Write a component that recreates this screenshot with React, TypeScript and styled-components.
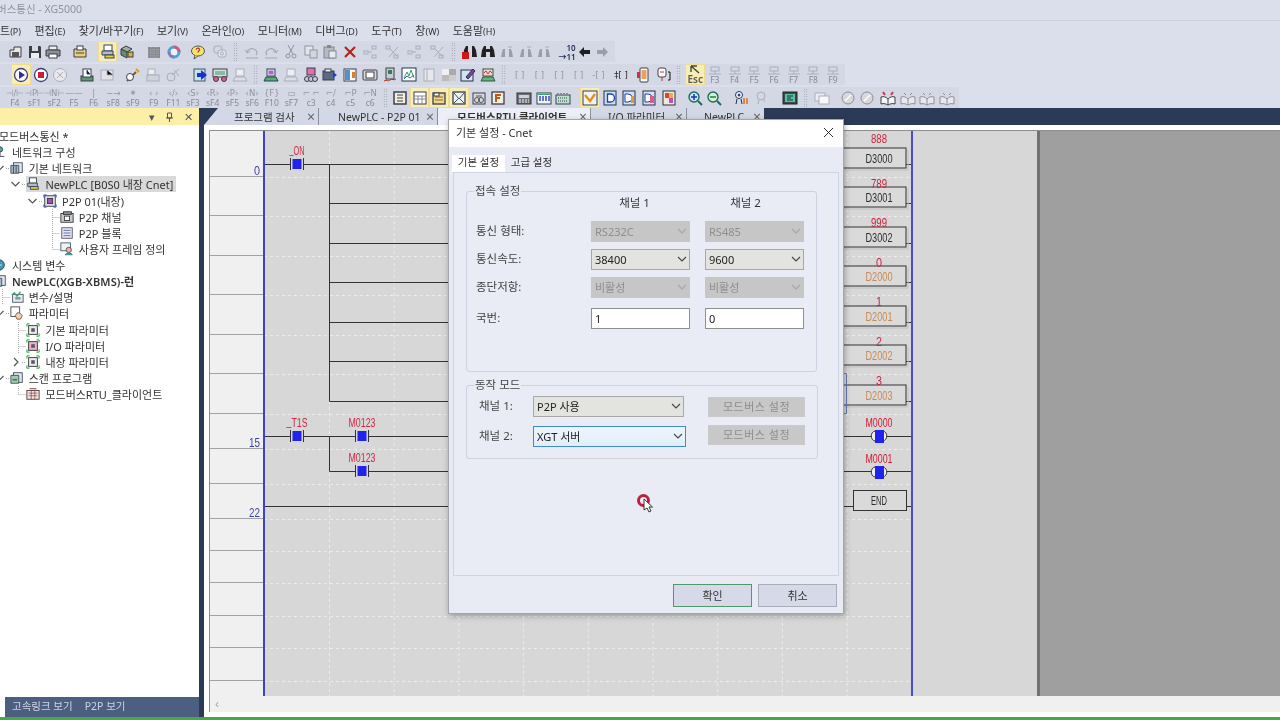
import React, { ReactNode } from 'react'
import styled, { createGlobalStyle } from 'styled-components'

const GlobalStyle = createGlobalStyle`
  html, body { margin: 0; padding: 0; background: #d9dde9; }
  * { box-sizing: border-box; }
`

const FONT = `"Noto Sans", "Noto Sans CJK KR", sans-serif`

const d = '#3a3f48'
const g = '#a9aeba'

const glyphs: Record<string, ReactNode> = {
  open: <><path d="M2 6h4V3h7v10H2z" fill="#e6e6e6" stroke={d} /><rect x="4" y="8" width="7" height="5" fill="#555" /></>,
  save: <><path d="M2 2h11l1 1v11H2z" fill="#3c3f46" /><rect x="5" y="2" width="6" height="5" fill="#d8dbe2" /><rect x="4" y="9" width="8" height="5" fill="#eee" /></>,
  print: <><path d="M4 2h8v4H4z" fill="#eee" stroke={d} /><path d="M1 6h14v6H1z" fill="#8c8f96" stroke={d} /><rect x="4" y="10" width="8" height="4" fill="#fff" stroke={d} /></>,
  clip: <><path d="M2 5h12v8H2z" fill="#ebcf78" stroke={d} /><rect x="5" y="2" width="6" height="4" fill="#fff" stroke={d} /><path d="M4 9h8" stroke={d} /></>,
  plc: <><rect x="4" y="1" width="8" height="6" fill="#fff" stroke="#345" /><path d="M2 7h11v4H2z" fill="#b8bcc6" stroke="#345" /><rect x="5" y="11" width="9" height="3" fill="#e6cf40" stroke="#345" /></>,
  plcg: <><path d="M2 5l5-3 6 3-5 3z" fill="#9fb09a" stroke={d} /><path d="M2 5v6l6 3V8z" fill="#6f8a68" stroke={d} /><rect x="9" y="8" width="5" height="5" fill="#d9b33a" stroke={d} /></>,
  noise: <><rect x="2" y="3" width="12" height="11" fill="#85888e" /><path d="M2 6h12M2 9h12M2 12h12M5 3v11M8 3v11M11 3v11" stroke="#a7a9ae" strokeDasharray="1 1" /></>,
  ring: <><circle cx="8" cy="8" r="5" fill="#eef" stroke="#46a6d8" strokeWidth="3" /><path d="M8 3a5 5 0 0 1 5 5" fill="none" stroke="#d2567a" strokeWidth="3" /><path d="M3 8a5 5 0 0 0 5 5" fill="none" stroke="#7d7fb5" strokeWidth="3" /></>,
  bubble: <><ellipse cx="8" cy="7" rx="6.5" ry="5" fill="#f7e26d" stroke="#555" /><path d="M5 11l-1 4 4-3" fill="#f7e26d" stroke="#555" /><path d="M6 5.5c1-2 4-1.500 3.500.5-.3 1-1.500 1-1.500 2.500" fill="none" stroke="#c0392b" strokeWidth="1.300" /></>,
  bubbleg: <><rect x="2" y="2" width="8" height="7" rx="2" fill="none" stroke={g} /><rect x="6" y="6" width="8" height="7" rx="2" fill="#dfe2ea" stroke={g} /><circle cx="10" cy="9.500" r="1.500" fill="none" stroke={g} /></>,
  undo: <><path d="M3 8a5 4 0 1 1 9 3" fill="none" stroke="#9fa8ba" strokeWidth="1.200" /><path d="M1 6l2 3 3-2" fill="none" stroke="#9fa8ba" /><path d="M2 14h12" stroke="#9fa8ba" /></>,
  redo: <><path d="M13 8a5 4 0 1 0-9 3" fill="none" stroke="#9fa8ba" strokeWidth="1.200" /><path d="M15 6l-2 3-3-2" fill="none" stroke="#9fa8ba" /><path d="M2 14h12" stroke="#9fa8ba" /></>,
  cut: <><path d="M5 1l5 9M11 1L6 10" stroke="#8f95a3" /><circle cx="5" cy="12" r="2" fill="none" stroke="#8f95a3" /><circle cx="11" cy="12" r="2" fill="none" stroke="#8f95a3" /></>,
  copy: <><rect x="2" y="2" width="8" height="9" fill="#e3e5ec" stroke="#8f95a3" /><rect x="7" y="6" width="7" height="8" fill="#d3d6df" stroke="#8f95a3" /></>,
  paste: <><rect x="2" y="3" width="10" height="11" fill="#b7bac2" stroke="#80858f" /><rect x="5" y="1" width="4" height="3" fill="#888" /><rect x="7" y="7" width="7" height="7" fill="#e9ebf0" stroke="#80858f" /></>,
  redx: <path d="M3 3l10 10M13 3L3 13" stroke="#b4231d" strokeWidth="2.200" />,
  nodes: <><rect x="1" y="7" width="4" height="3" fill="none" stroke={g} /><path d="M5 8h4" stroke={g} /><rect x="9" y="2" width="4" height="3" fill="none" stroke={g} /><rect x="9" y="11" width="4" height="3" fill="none" stroke={g} /></>,
  nodex: <><rect x="1" y="2" width="4" height="3" fill="none" stroke={g} /><path d="M5 5l8 8M13 3L4 13" stroke={g} /><rect x="9" y="11" width="4" height="3" fill="none" stroke={g} /></>,
  binr: <><path d="M2 6l2-4h2v11H1zM14 6l-2-4h-2v11h5z" fill="#222" /><rect x="0" y="8" width="7" height="7" fill="#d01818" /></>,
  bin: <path d="M2 6l2-4h2v11H1zM14 6l-2-4h-2v11h5zM6 5h4v3H6z" fill="#222" />,
  bing: <><path d="M3 8l1-3h2v8H2zM13 8l-1-3h-2v8h4z" fill="#9a9ea8" /><path d="M9 3h4" stroke={g} /></>,
  left: <path d="M8 3L3 8l5 5V10h6V6H8z" fill="#1d1f24" />,
  right: <path d="M8 3l5 5-5 5V10H2V6h6z" fill="#9a9ea8" />,
  play: <><circle cx="8" cy="8" r="6.500" fill="#fff" stroke="#3a3f78" strokeWidth="1.300" /><path d="M6 4l6 4-6 4z" fill="#2a2f9c" /></>,
  stop: <><circle cx="8" cy="8" r="6.500" fill="#fff" stroke="#3a3f78" strokeWidth="1.300" /><rect x="5" y="5" width="6" height="6" fill="#c4203c" /></>,
  xoff: <><circle cx="8" cy="8" r="6.500" fill="#e9e9ec" stroke={g} /><path d="M5 5l6 6M11 5l-6 6" stroke={g} /></>,
  clock: <><rect x="2" y="9" width="12" height="5" fill="#5a9a70" stroke={d} /><rect x="4" y="2" width="8" height="8" fill="#fff" stroke={d} /><path d="M8 3v4h3" stroke="#2a3a9c" /></>,
  docg: <><rect x="2" y="3" width="12" height="10" fill="#e0e2e8" stroke={g} /><path d="M8 3v5h6" stroke={g} /></>,
  wand: <><path d="M2 14l9-9" stroke="#7a5a30" strokeWidth="2" /><circle cx="5" cy="10" r="3.500" fill="#fff" stroke={d} /><path d="M11 2l3 3" stroke="#d4a020" strokeWidth="2" /></>,
  plcgray: <><rect x="3" y="2" width="7" height="6" fill="#ecedf1" stroke={g} /><rect x="2" y="8" width="12" height="6" fill="#cfd2da" stroke={g} /></>,
  toolx: <><circle cx="6" cy="10" r="4" fill="none" stroke={g} /><path d="M7 8l7-6M9 3l5 6" stroke={g} /></>,
  push: <><rect x="2" y="2" width="11" height="12" fill="#bfe3f0" stroke="#456" /><path d="M15 8L9 3v3H5v4h4v3z" fill="#1a2fd0" /></>,
  net: <><rect x="1" y="2" width="14" height="8" fill="#cfe4da" stroke={d} /><path d="M3 5h10M3 7h10" stroke="#4a8a70" /><circle cx="4" cy="12" r="2.500" fill="#e05a8a" stroke={d} /><circle cx="12" cy="12" r="2.500" fill="#e05a8a" stroke={d} /></>,
  mon: <><rect x="4" y="2" width="8" height="7" fill="#f2f2f6" stroke="#245" /><rect x="5.500" y="3.500" width="5" height="4" fill="#b060c8" /><path d="M1 14l2-4h10l2 4z" fill="#58b070" stroke="#245" /></>,
  mong: <><rect x="4" y="2" width="8" height="7" fill="#eceef2" stroke={g} /><path d="M1 14l2-4h10l2 4z" fill="#dcdee6" stroke={g} /></>,
  pink: <><rect x="4" y="1" width="8" height="7" fill="#e070b0" stroke={d} /><circle cx="4" cy="12" r="2.500" fill="#c8c8e0" stroke={d} /><circle cx="8" cy="12" r="2.500" fill="#c8c8e0" stroke={d} /><circle cx="12" cy="12" r="2.500" fill="#c8c8e0" stroke={d} /></>,
  folderb: <><rect x="1" y="4" width="11" height="9" fill="#5a6a80" stroke={d} /><rect x="3" y="2" width="6" height="3" fill="#eee" stroke={d} /><path d="M15 8l-4-3v6z" fill="#1a40d0" /></>,
  panels: <><rect x="2" y="2" width="12" height="12" fill="#fff" stroke={d} /><rect x="3" y="3" width="5" height="10" fill="#5a90c0" /><rect x="10" y="5" width="3" height="6" fill="#d88030" /></>,
  tv: <><rect x="1" y="3" width="14" height="10" rx="1" fill="#d9d9dd" stroke={d} /><rect x="4" y="5" width="8" height="6" fill="#fff" stroke={d} /></>,
  batt: <><rect x="4" y="1" width="8" height="11" fill="#c8ccd4" stroke={d} /><rect x="6" y="3" width="4" height="4" fill="#3a7a5a" /><path d="M2 14c3-2 4 1 6-1s4 1 6-1" fill="none" stroke="#c03020" /></>,
  chart: <><rect x="1" y="1" width="14" height="13" fill="#fff" stroke="#234" /><path d="M3 11l3-6 2 4 2-6 3 8" fill="none" stroke="#38a060" /><path d="M3 12l3-3 3 2 4-3" fill="none" stroke="#3060d0" /></>,
  tileg: <><rect x="3" y="2" width="10" height="12" fill="#e6e8ee" stroke={g} /><path d="M6 2v12" stroke={g} /></>,
  tiles: <><rect x="1" y="2" width="7" height="6" fill="#f0f0f2" /><rect x="8" y="2" width="7" height="6" fill="#aaa" /><rect x="1" y="8" width="7" height="6" fill="#bbb" /><rect x="8" y="8" width="7" height="6" fill="#ccc" /></>,
  memo: <><rect x="1" y="3" width="12" height="11" fill="#d0e4f4" stroke="#234" /><path d="M6 10l7-8 2 2-7 8z" fill="#8a40a0" stroke="#234" /></>,
  wave: <><rect x="3" y="2" width="10" height="7" fill="#f6d4d4" stroke="#354" /><path d="M4 6l2-2 2 3 2-3 2 2" fill="none" stroke="#c03030" /><path d="M1 14l2-4h10l2 4z" fill="#5fb878" stroke="#354" /></>,
  phone: <><rect x="4" y="1" width="8" height="14" rx="1" fill="#fff" stroke={d} /><rect x="5.500" y="3" width="5" height="9" fill="#e9a060" /><path d="M1 5h3v6H1z" fill="#d03040" /></>,
  tag: <><rect x="3" y="1" width="8" height="9" rx="2" fill="#fff" stroke={d} /><path d="M7 10v4M5 5h4" stroke="#c03030" /><path d="M13 5h2v8h-2" fill="none" stroke="#111" /></>,
  doc: <><rect x="2" y="2" width="12" height="12" fill="#f2efe0" stroke={d} strokeWidth="1.500" /><path d="M5 5h6M5 8h6M5 11h6" stroke={d} /></>,
  grid: <><rect x="2" y="2" width="12" height="12" fill="#fff" stroke={d} /><path d="M2 6h12M2 9h12M6 6v8M10 6v8" stroke="#889" /></>,
  foldy: <><rect x="2" y="3" width="12" height="11" fill="#ecd690" stroke={d} strokeWidth="1.300" /><path d="M4 7h8M4 10h8" stroke="#963" /><rect x="3" y="3" width="5" height="3" fill="#fff" stroke={d} /></>,
  env: <><rect x="2" y="2" width="12" height="12" fill="#eef0f2" stroke={d} strokeWidth="1.300" /><path d="M3 3l5 6 5-6M3 13l5-5 5 5" fill="none" stroke="#456" /></>,
  gear: <><rect x="2" y="3" width="12" height="11" fill="#d8dadf" stroke={d} /><circle cx="6" cy="10" r="2.500" fill="none" stroke="#555" /><circle cx="10" cy="10" r="2.500" fill="none" stroke="#555" /><path d="M5 6h6" stroke="#555" /></>,
  ff: <><rect x="2" y="2" width="12" height="12" fill="#f1eee2" stroke={d} strokeWidth="1.300" /><path d="M6 12V5h5M6 8h4" fill="none" stroke="#c05a10" strokeWidth="2" /></>,
  blk: <><rect x="1" y="3" width="14" height="11" fill="#6e7278" stroke="#333" /><rect x="3" y="5" width="10" height="3" fill="#cfd2d8" /><path d="M3 10h10M3 12h10" stroke="#eee" strokeDasharray="2 1" /></>,
  blk2: <><rect x="1" y="3" width="14" height="11" fill="#f2f6fb" stroke="#345" /><path d="M4 6v5M7 6v5M10 6v5M13 6v5" stroke="#2a40b0" strokeWidth="1.400" /><path d="M2 4.500h12" stroke="#48a070" /></>,
  blk3: <><rect x="1" y="5" width="14" height="9" fill="#bfe0cc" stroke="#345" /><path d="M3 3v2M6 3v2M9 3v2M12 3v2M3 8h10M3 11h10" stroke="#345" strokeDasharray="1 1" /></>,
  vv: <><rect x="1" y="1" width="14" height="14" fill="#f3f3f4" stroke={d} /><path d="M3 5l5 6 5-7" fill="none" stroke="#e09020" strokeWidth="2.400" /></>,
  dd1: <><rect x="2" y="1" width="12" height="14" fill="#c9ddf5" stroke="#234" /><path d="M5.500 4h3a4 4 0 0 1 0 8h-3z" fill="#fff" stroke="#1a3fb0" strokeWidth="1.300" /></>,
  dd2: <><rect x="2" y="1" width="12" height="14" fill="#cfe0f0" stroke="#234" /><path d="M4 4h3a4 4 0 0 1 0 8H4z" fill="#fff" stroke="#1a3fb0" /><rect x="10" y="6" width="3" height="7" fill="#d89a40" /></>,
  dd3: <><rect x="2" y="1" width="12" height="14" fill="#d8e0ee" stroke="#234" /><path d="M4 4h3a4 4 0 0 1 0 8H4z" fill="#fff" stroke="#1a3fb0" /><rect x="9" y="6" width="4" height="7" fill="#d85a9a" /></>,
  dd4: <><rect x="2" y="1" width="12" height="14" fill="#f4e8d8" stroke="#234" /><rect x="4" y="3" width="4" height="5" fill="#e04040" /><rect x="8" y="8" width="4" height="5" fill="#c050b0" /><rect x="8" y="3" width="4" height="5" fill="#e8b040" /></>,
  zin: <><circle cx="7" cy="7" r="5" fill="#cfe8f4" stroke="#1a6a60" strokeWidth="1.400" /><path d="M11 11l4 4" stroke="#1a6a60" strokeWidth="2" /><path d="M4 7h6M7 4v6" stroke="#1a30c0" strokeWidth="1.500" /></>,
  zout: <><circle cx="7" cy="7" r="5" fill="#d8f0d0" stroke="#1a6a60" strokeWidth="1.400" /><path d="M11 11l4 4" stroke="#1a6a60" strokeWidth="2" /><path d="M4 7h6" stroke="#1a8040" strokeWidth="1.500" /></>,
  probe: <><circle cx="6" cy="5" r="3.500" fill="#fff" stroke="#234" /><circle cx="6" cy="5" r="1.500" fill="#2a40c0" /><path d="M4 9l-1 5M8 9l1 5" stroke="#234" /><path d="M11 8v6M14 8v6" stroke="#e07020" strokeWidth="1.500" /></>,
  probeg: <><circle cx="8" cy="6" r="4" fill="none" stroke={g} /><path d="M6 10l-1 4M10 9l2 3" stroke={g} /></>,
  term: <><rect x="1" y="2" width="14" height="12" fill="#3e4a4a" stroke="#222" /><rect x="3" y="4" width="10" height="8" fill="#5ac0a0" /><path d="M5 6h6M5 8h4M5 10h6" stroke="#134" /></>,
  page: <><rect x="1" y="3" width="10" height="8" fill="#eceef3" stroke={g} /><rect x="5" y="6" width="10" height="8" fill="#f7f7fa" stroke={g} /></>,
  disc: <><circle cx="8" cy="8" r="6" fill="#d8d8dc" stroke="#8a8e98" /><path d="M5 11l6-6" stroke="#fff" strokeWidth="1.500" /></>,
  book: <><path d="M1 7c3-1 5 0 7 2 2-2 4-3 7-2v7c-3-1-5 0-7 1-2-1-4-2-7-1z" fill="#f4f4f6" stroke={d} /><path d="M8 9v6" stroke={d} /><path d="M3 2l2 3M13 2l-2 3" stroke="#d0305a" strokeWidth="2" /></>,
  bookg: <><path d="M1 7c3-1 5 0 7 2 2-2 4-3 7-2v7c-3-1-5 0-7 1-2-1-4-2-7-1z" fill="#e6e8ee" stroke="#8c909a" /><path d="M8 9v6" stroke="#8c909a" /><path d="M4 3l2 2M12 3l-2 2" stroke="#8c909a" /></>,
  // tree icons
  tnet: <><circle cx="8" cy="5" r="3" fill="#5aa0a0" stroke={d} /><path d="M3 13h10M8 8v5" stroke={d} /><rect x="2" y="10" width="4" height="4" fill="#e0c060" stroke={d} /></>,
  cube: <><rect x="4" y="2" width="10" height="11" fill="#e3e8ee" stroke="#3c4a58" /><path d="M1 5h9v9H1z" fill="#aab8c4" stroke="#3c4a58" /><path d="M4 5v9M7 5v9" stroke="#3c4a58" /></>,
  cubeg: <><rect x="4" y="2" width="10" height="11" fill="#e3e8ee" stroke="#3c4a58" /><path d="M1 5h9v9H1z" fill="#a9c8b4" stroke="#3c4a58" /><path d="M3 10h5" stroke="#209050" strokeWidth="2" /></>,
  p2p: <><rect x="2" y="2" width="12" height="12" fill="#e4e6ec" stroke="#333" /><rect x="5" y="5" width="6" height="6" fill="#a050b0" stroke="#333" /><path d="M1 1h3M1 1v3M15 1h-3M15 1v3M1 15h3M1 15v-3M15 15h-3M15 15v-3" stroke="#3040d0" /></>,
  tch: <><rect x="1" y="4" width="14" height="10" fill="#c9cdd6" stroke="#333" /><rect x="4" y="2" width="9" height="3" fill="#8c96a0" stroke="#333" /><rect x="5" y="7" width="6" height="5" fill="#fff" stroke="#333" /></>,
  tblk: <><rect x="2" y="2" width="12" height="12" fill="#e6e7f4" stroke="#556" /><path d="M4 5h8M4 8h8M4 11h8" stroke="#5a62a0" /></>,
  tuser: <><rect x="1" y="1" width="11" height="9" fill="#f2f2f6" stroke="#456" /><circle cx="10" cy="9" r="3" fill="#e6b890" stroke="#456" /><path d="M6 15c0-3 8-3 8 0" fill="#40a0a0" stroke="#456" /></>,
  tsys: <><circle cx="7" cy="8" r="6" fill="#3e9ab0" stroke="#345" /><path d="M4 8h6M7 4v8" stroke="#eee" /></>,
  tvars: <><rect x="3" y="5" width="12" height="9" fill="#e8ecef" stroke="#456" /><path d="M2 6l3-3 3 4 4-5" fill="none" stroke="#40a070" strokeWidth="1.500" /><rect x="6" y="8" width="6" height="3" fill="#89a" /></>,
  tparam: <><rect x="1" y="1" width="10" height="11" fill="#fff" stroke="#445" /><path d="M8 8c2-1 4 0 6 3l-2 4H8L6 11z" fill="#f4d0b0" stroke="#654" /></>,
  frame: <><rect x="3" y="3" width="10" height="10" fill="#e6e8ec" stroke="#333" /><rect x="6" y="6" width="4" height="4" fill="#556" /><path d="M1 1h3M1 1v3M15 1h-3M15 1v3M1 15h3M1 15v-3M15 15h-3M15 15v-3" stroke="#40b050" strokeWidth="1.300" /></>,
  framep: <><rect x="3" y="3" width="10" height="10" fill="#e8b0c8" stroke="#333" /><rect x="6" y="6" width="4" height="4" fill="#556" /><path d="M1 1h3M1 1v3M15 1h-3M15 1v3M1 15h3M1 15v-3M15 15h-3M15 15v-3" stroke="#40b050" strokeWidth="1.300" /></>,
  tprog: <><rect x="1" y="4" width="14" height="10" fill="#efe6e6" stroke="#533" /><path d="M3 7h10M3 10h10M6 4v10M10 4v10" stroke="#a05a5a" /><path d="M4 2h8" stroke="#533" /></>,
}

type ToolItem = string | number | { k?: string; on?: boolean; text?: string; top?: string; key?: string }

const rowOne: ToolItem[] = [
  1, 'open', -1, 'save', -1, 'print', 7, 'clip', 8, { k: 'plc', on: true }, 'plcg', 7, 'noise', 'ring', 5, 'bubble', 2, 'bubbleg', 'grip',
  'undo', 'redo', 'cut', 'copy', 'paste', 'redx', 1, 'nodes', 2, 'nodex', 3, 'nodes', 3, 'nodex', 'grip',
  'binr', -1, 'bin', -1, 'bing', -1, 'bing', -1, 'bing', 3, { text: '10\n→11' }, -3, 'left', 'right',
]

const rowTwo: ToolItem[] = [
  6, { k: 'play', on: true }, 'stop', 'xoff', 7, 'clock', 'docg', 7, 'wand', 'plcgray', 'toolx', 8, 'push', 'net', 'mong', 'grip',
  'mon', 'mong', 'pink', 'folderb', 'panels', 'tv', 'batt', 'chart', 'tileg', 'tiles', 'memo', 'wave', 'grip',
  { top: '[ ]' }, { top: '[ ]' }, { top: '[ ]' }, { top: '[ ]' }, { top: '-[ ]' }, 3, { top: '‡[ ]', key: 'dark' }, 3, 'phone', 'tag', 'grip',
  { key: 'esc', on: true }, { key: 'F3' }, { key: 'F4' }, { key: 'F5' }, { key: 'F6' }, { key: 'F7' }, { key: 'F8' }, { key: 'F9' },
]

const rowThree: ToolItem[] = [
  { top: '⊣/⊢', key: 'F4' }, { top: '⊣P⊢', key: 'sF1' }, { top: '⊣N⊢', key: 'sF2' }, { top: '——', key: 'F5' }, { top: '|', key: 'F6' }, { top: '−→', key: 'sF8' }, { top: '⁕', key: 'sF9' },
  1, { top: '‹ ›', key: 'F9' }, { top: '‹/›', key: 'F11' }, { top: '‹S›', key: 'sF3' }, { top: '‹R›', key: 'sF4' }, { top: '‹P›', key: 'sF5' }, { top: '‹N›', key: 'sF6' }, { top: '{F}', key: 'F10' }, { top: '▭', key: 'sF7' },
  { top: '⌐ ⌐', key: 'c3' }, { top: '⌐/', key: 'c4' }, { top: '⌐P', key: 'c5' }, { top: '⌐N', key: 'c6' }, 'grip',
  -2, 'doc', { k: 'grid', on: true }, { k: 'foldy', on: true }, { k: 'env', on: true }, 'gear', 'ff', 6, 'blk', 'blk2', 'blk3', 7, { k: 'vv', on: true }, 'dd1', 'dd2', 'dd3', 'dd4', 6, 'zin', 'zout', 7, 'probe', 'probeg', 10, 'term', 'grip', 'page', 6, 'disc', 'disc', 1, 'book', 'bookg', 'bookg', 'bookg',
]

const menus = [['트', 'P'], ['편집', 'E'], ['찾기/바꾸기', 'F'], ['보기', 'V'], ['온라인', 'O'], ['모니터', 'M'], ['디버그', 'D'], ['도구', 'T'], ['창', 'W'], ['도움말', 'H']]

const treeRows = [
  { level: 0, text: '모드버스통신 *' },
  { level: 1, text: '네트워크 구성', icon: 'tnet' },
  { level: 2, text: '기본 네트워크', icon: 'cube', arrow: 'down' },
  { level: 3, text: 'NewPLC [B0S0 내장 Cnet]', icon: 'plc', arrow: 'down', selected: true },
  { level: 4, text: 'P2P 01(내장)', icon: 'p2p', arrow: 'down' },
  { level: 5, text: 'P2P 채널', icon: 'tch', elbow: 'mid' },
  { level: 5, text: 'P2P 블록', icon: 'tblk', elbow: 'mid' },
  { level: 5, text: '사용자 프레임 정의', icon: 'tuser', elbow: 'end' },
  { level: 1, text: '시스템 변수', icon: 'tsys' },
  { level: 1, text: 'NewPLC(XGB-XBMS)-런', icon: 'cube', bold: true },
  { level: 2, text: '변수/설명', icon: 'tvars', elbow: 'mid' },
  { level: 2, text: '파라미터', icon: 'tparam', arrow: 'down' },
  { level: 3, text: '기본 파라미터', icon: 'frame', elbow: 'mid' },
  { level: 3, text: 'I/O 파라미터', icon: 'framep', elbow: 'mid' },
  { level: 3, text: '내장 파라미터', icon: 'frame', arrow: 'right' },
  { level: 2, text: '스캔 프로그램', icon: 'cubeg', arrow: 'down' },
  { level: 3, text: '모드버스RTU_클라이언트', icon: 'tprog', elbow: 'end' },
]

const docTabs = [
  { text: '프로그램 검사', pad: 30, width: 114, first: true },
  { text: 'NewPLC - P2P 01', pad: 19, width: 119 },
  { text: '모드버스RTU 클라이언트', pad: 19, width: 153, active: true },
  { text: 'I/O 파라미터', pad: 17, width: 96 },
  { text: 'NewPLC', pad: 17, width: 78 },
]

const gridRows = [176, 215, 255, 294, 334, 373, 413, 448, 483, 518, 550, 582, 615, 647, 680]
const branchRows = [203, 243, 282, 322, 361, 401]
const outputs = [
  { top: 148, wire: 164, value: '888', valueY: 143, label: 'D3000', warm: false },
  { top: 187, wire: 203, value: '789', valueY: 187.5, label: 'D3001', warm: false },
  { top: 227, wire: 243, value: '999', valueY: 227, label: 'D3002', warm: false },
  { top: 266, wire: 282, value: '0', valueY: 266.5, label: 'D2000', warm: true },
  { top: 306, wire: 322, value: '1', valueY: 306, label: 'D2001', warm: true },
  { top: 345, wire: 361, value: '2', valueY: 345.5, label: 'D2002', warm: true },
  { top: 385, wire: 401, value: '3', valueY: 385, label: 'D2003', warm: true },
]

const Screen = styled.div`
  position: relative;
  width: 1280px;
  height: 720px;
  overflow: hidden;
  background: #dbdfeb;
  font-family: ${FONT};
  font-size: 11px;
  color: #333;
  display: flex;
  flex-direction: column;
  filter: blur(0.35px);
`
const TitleBar = styled.div`
  height: 20px;
  line-height: 19px;
  margin-left: -3px;
  color: #8e929e;
  font-size: 10.500px;
  flex: none;
`
const MenuBar = styled.div`
  height: 21px;
  flex: none;
  display: flex;
  align-items: center;
  gap: 13.500px;
  border-top: 1px solid #cdd1dd;
  padding-bottom: 3px;
  white-space: nowrap;
`
const MenuItem = styled.span`
  font-size: 11px;
  color: #333;
  small { font-size: 9px; }
`
const ToolStack = styled.div`
  flex: none;
  height: 67px;
  display: flex;
  flex-direction: column;
  align-items: flex-start;
  gap: 2px;
`
const ToolRow = styled.div`
  height: 21px;
  display: flex;
  align-items: center;
  background: #d4d8e5;
  padding-left: 5px;
  padding-right: 2px;
`
const ToolSlot = styled.div<{ $on?: boolean }>`
  width: 19.7px;
  height: 21px;
  flex: none;
  display: flex;
  flex-direction: column;
  align-items: center;
  justify-content: center;
  background: ${p => (p.$on ? '#f7edb6' : 'transparent')};
  box-shadow: ${p => (p.$on ? 'inset 0 0 0 1px #f0dc8c' : 'none')};
`
const ToolGap = styled.div<{ $w: number }>`
  flex: none;
  width: ${p => Math.max(p.$w, 0)}px;
  margin-right: ${p => Math.min(p.$w, 0)}px;
`
const Grip = styled.div`
  flex: none;
  width: 5px;
  height: 19px;
  margin: 0 4px 0 3px;
  background-image: radial-gradient(#8b8f9a 0.7px, transparent 0.8px);
  background-size: 2.500px 2.500px;
`
const KeyTop = styled.span<{ $dark?: boolean }>`
  font-family: "DejaVu Sans", sans-serif;
  font-size: 8.500px;
  line-height: 10px;
  color: ${p => (p.$dark ? '#222' : '#90959f')};
  white-space: nowrap;
`
const KeyLabel = styled.span`
  font-size: 8.500px;
  line-height: 9px;
  color: #858a96;
`
const EscKey = styled.span`
  font-size: 10px;
  line-height: 10px;
  font-weight: 600;
  color: #5a5a50;
`
const CountLabel = styled.span`
  font-size: 8px;
  line-height: 9px;
  font-weight: 600;
  color: #1e2a55;
  text-align: right;
  white-space: pre;
`
const Workspace = styled.div`
  flex: 1;
  min-height: 0;
  display: flex;
`
const SidePanel = styled.aside`
  width: 199px;
  flex: none;
  background: #fff;
  display: flex;
  flex-direction: column;
`
const PanelHead = styled.div`
  height: 17px;
  flex: none;
  background: #fcf0a8;
  display: flex;
  align-items: center;
  justify-content: flex-end;
  gap: 10px;
  padding-right: 6px;
  color: #555;
`
const Tree = styled.div`
  flex: 1;
  padding-top: 3px;
  overflow: hidden;
`
const TreeRow = styled.div<{ $left: number }>`
  height: 16.125px;
  display: flex;
  align-items: center;
  margin-left: ${p => p.$left}px;
  white-space: nowrap;
`
const ArrowSlot = styled.div`
  width: 17px;
  height: 16px;
  flex: none;
`
const TreeBody = styled.div<{ $selected?: boolean }>`
  display: flex;
  align-items: center;
  gap: 5px;
  height: 16px;
  background: ${p => (p.$selected ? '#d9d9d9' : 'transparent')};
  padding-right: 3px;
`
const TreeText = styled.span<{ $bold?: boolean }>`
  font-size: 11px;
  color: #333;
  font-weight: ${p => (p.$bold ? 600 : 400)};
  letter-spacing: ${p => (p.$bold ? '0.1px' : '0')};
`
const SideTabs = styled.div`
  height: 20px;
  flex: none;
  margin-left: 5px;
  padding: 0 0 3px 7px;
  background: #4d5f80;
  color: #ccd4e2;
  font-size: 10.500px;
  display: flex;
  align-items: center;
  gap: 12px;
`
const MainArea = styled.main`
  flex: 1;
  min-width: 0;
  background: #2b3a56;
  padding-left: 5px;
  display: flex;
  flex-direction: column;
`
const DocTabs = styled.div`
  height: 17px;
  flex: none;
  display: flex;
`
const DocTab = styled.div<{ $w: number; $pad: number; $active?: boolean; $first?: boolean }>`
  width: ${p => p.$w}px;
  padding-left: ${p => p.$pad}px;
  padding-right: 3px;
  flex: none;
  display: flex;
  align-items: center;
  justify-content: space-between;
  white-space: nowrap;
  font-size: 10.500px;
  background: ${p => (p.$active ? '#eceff7' : '#d3d8e6')};
  border-left: ${p => (p.$first ? 'none' : '1px solid #87909f')};
  font-weight: ${p => (p.$active ? 600 : 400)};
  clip-path: ${p => (p.$first ? 'polygon(14px 0, 100% 0, 100% 100%, 0 100%)' : 'none')};
`
const TabClose = styled.span`
  color: #666;
  font-size: 14px;
  line-height: 14px;
  font-weight: 400;
`
const EditorFrame = styled.div`
  flex: 1;
  min-height: 0;
  background: #fff;
  padding: 5px 0 5px 5px;
  display: flex;
  flex-direction: column;
`
const Canvas = styled.div`
  flex: 1;
  min-height: 0;
  display: flex;
  background: #9f9f9f;
  border-top: 1px solid #8e8e8e;
  border-left: 1px solid #8e8e8e;
`
const LadderSvg = styled.svg`
  flex: none;
  display: block;
  width: 830px;
  height: 565px;
  font-family: "Liberation Sans", sans-serif;
`
const HScroll = styled.div`
  height: 16px;
  flex: none;
  border-left: 1px solid #8e8e8e;
  background: #f0f0f0;
  padding-left: 5px;
  color: #aaa;
  font-size: 13px;
  line-height: 15px;
`
const BottomEdge = styled.div`
  height: 3px;
  flex: none;
  background: #4aa64c;
`

const Dialog = styled.section`
  position: absolute;
  left: 448px;
  top: 119px;
  width: 396px;
  height: 495px;
  background: #e8ebf4;
  border: 1px solid #a4a6ac;
  box-shadow: 1px 2px 6px rgba(0, 0, 0, 0.3);
  display: flex;
  flex-direction: column;
`
const DialogTitle = styled.header`
  height: 27px;
  flex: none;
  background: #fff;
  display: flex;
  align-items: center;
  justify-content: space-between;
  padding: 0 9px 3px 7px;
  font-size: 11px;
  color: #333;
`
const DialogTabs = styled.div`
  height: 25px;
  flex: none;
  display: flex;
  align-items: flex-end;
  padding-left: 3px;
`
const DialogTab = styled.div<{ $active?: boolean }>`
  width: 53px;
  height: 17px;
  line-height: 15px;
  text-align: center;
  font-size: 10.500px;
  background: ${p => (p.$active ? '#fff' : 'transparent')};
`
const TabPage = styled.div`
  height: 404px;
  margin: 0 4px;
  flex: none;
  border: 1px solid #cfd4e2;
  background: #e9ecf5;
  padding: 18px 0 0 12px;
  display: flex;
  flex-direction: column;
  gap: 13px;
`
const GroupBox = styled.div<{ $w: number; $h: number }>`
  position: relative;
  width: ${p => p.$w}px;
  height: ${p => p.$h}px;
  border: 1px solid #cdd2e0;
  border-radius: 3px;
`
const GroupLegend = styled.span`
  position: absolute;
  left: 7px;
  top: -8px;
  padding: 0 1px;
  line-height: 14px;
  background: #e9ecf5;
  font-size: 11.500px;
  color: #444;
`
const LinkGrid = styled.div`
  display: grid;
  grid-template-columns: 100px 99px 99px;
  grid-template-rows: 29px 28px 28px 31px 21px;
  column-gap: 15px;
  padding-left: 9px;
`
const ColHead = styled.div<{ $inset: number }>`
  line-height: 22px;
  text-align: center;
  padding-right: ${p => p.$inset}px;
  font-size: 11.500px;
  color: #333;
`
const FieldLabel = styled.div`
  font-size: 11.500px;
  line-height: 19px;
  color: #444;
  white-space: nowrap;
`
const Combo = styled.div<{ $disabled?: boolean; $focus?: boolean; $w?: number }>`
  width: ${p => (p.$w ? `${p.$w}px` : '100%')};
  height: 21px;
  display: flex;
  align-items: center;
  justify-content: space-between;
  padding: 0 2px 1px 3px;
  font-size: 11px;
  color: ${p => (p.$disabled ? '#8e8e8e' : '#222')};
  background: ${p => (p.$disabled ? '#c6c6c6' : p.$focus ? 'linear-gradient(#edf5fd, #e0eefa)' : '#e3e3e0')};
  border: 1px solid ${p => (p.$disabled ? '#c6c6c6' : p.$focus ? '#3f8ad0' : '#a8a8a8')};
`
const TextBox = styled.div`
  height: 21px;
  line-height: 19px;
  padding-left: 3px;
  font-size: 11px;
  color: #222;
  background: #fff;
  border: 1px solid #8f8f8f;
`
const ModeGrid = styled.div`
  display: grid;
  grid-template-columns: 54px 153px 119px;
  grid-template-rows: 30px 21px;
  padding: 10px 0 0 12px;
`
const ModeButton = styled.div<{ $drop?: number }>`
  margin-left: 22px;
  width: 97px;
  height: 20px;
  margin-top: ${p => p.$drop ?? 0}px;
  line-height: 18px;
  text-align: center;
  font-size: 11px;
  letter-spacing: 0.5px;
  white-space: nowrap;
  color: #8d8d8d;
  background: #c8c8c8;
  border: 1px solid #cacaca;
`
const DialogFooter = styled.footer`
  flex: 1;
  display: flex;
  justify-content: flex-end;
  gap: 6px;
  padding: 8px 6px 0 0;
`
const PushButton = styled.div<{ $primary?: boolean }>`
  width: 79px;
  height: 23px;
  line-height: 21px;
  text-align: center;
  font-size: 11px;
  color: #333;
  background: #d5d9e8;
  border: 1px solid ${p => (p.$primary ? '#4f9a6a' : '#a9adb8')};
`
const ClickMark = styled.div`
  position: absolute;
  left: 637px;
  top: 494px;
  width: 13px;
  height: 13px;
  border: 3px solid #c41e3e;
  border-radius: 50%;
  background: #eef0f7;
`
const PointerSvg = styled.svg`
  position: absolute;
  left: 643px;
  top: 498px;
`

const LadderText = styled.text<{ $c: string; $end?: boolean }>`
  font-size: 13px;
  fill: ${p => p.$c};
  text-anchor: ${p => (p.$end ? 'end' : 'middle')};
`

function Glyph({ k, size = 16 }: { k: string; size?: number }) {
  return (
    <svg width={size} height={size} viewBox="0 0 16 16">
      {glyphs[k]}
    </svg>
  )
}

function renderTool(item: ToolItem, i: number) {
  if (typeof item === 'number') return <ToolGap key={i} $w={item} />
  if (item === 'grip') return <Grip key={i} />
  if (typeof item === 'string') return <ToolSlot key={i}><Glyph k={item} /></ToolSlot>
  if (item.k) return <ToolSlot key={i} $on={item.on}><Glyph k={item.k} /></ToolSlot>
  if (item.text) return <ToolSlot key={i}><CountLabel>{item.text}</CountLabel></ToolSlot>
  if (item.key === 'esc') {
    return (
      <ToolSlot key={i} $on={item.on}>
        <svg width="12" height="9" viewBox="0 0 12 9"><path d="M2 1h6M2 1v6M2 1l8 7" fill="none" stroke="#444" strokeWidth="1.400" /></svg>
        <EscKey>Esc</EscKey>
      </ToolSlot>
    )
  }
  if (item.top && item.key === 'dark') return <ToolSlot key={i}><KeyTop $dark>{item.top}</KeyTop></ToolSlot>
  if (item.top) {
    return (
      <ToolSlot key={i}>
        <KeyTop>{item.top}</KeyTop>
        {item.key && <KeyLabel>{item.key}</KeyLabel>}
      </ToolSlot>
    )
  }
  return (
    <ToolSlot key={i}>
      <svg width="14" height="9" viewBox="0 0 14 9"><rect x="3" y="1" width="8" height="4" fill="none" stroke={g} /><path d="M7 5v3M1 8h12" stroke={g} /></svg>
      <KeyLabel>{item.key}</KeyLabel>
    </ToolSlot>
  )
}

function Contact({ x, y, label, w }: { x: number; y: number; label: string; w: number }) {
  const system = label.startsWith('_')
  return (
    <g>
      <LadderText x={x} y={y - 9.500} $c="#cc2a44" textLength={w} lengthAdjust="spacingAndGlyphs">
        {system ? <><tspan dy={-2}>_</tspan><tspan dy={2}>{label.slice(1)}</tspan></> : label}
      </LadderText>
      <rect x={x - 6} y={y - 6} width="12" height="12" fill="#d7d7d7" />
      <path d={`M${x - 6.500} ${y - 6}v12M${x + 6.500} ${y - 6}v12`} stroke="#333" />
      <rect x={x - 4.500} y={y - 5} width="9" height="10" fill="#2222ee" />
    </g>
  )
}

function Coil({ y, label }: { y: number; label: string }) {
  return (
    <g>
      <LadderText x={879} y={y - 9.500} $c="#d21a36" textLength={27} lengthAdjust="spacingAndGlyphs">{label}</LadderText>
      <path d={`M875 ${y - 5}c-5 1-5 9 0 10h8c5-1 5-9 0-10z`} fill="#eee" stroke="#333" />
      <rect x="875" y={y - 6} width="9" height="13" fill="#2222ee" />
    </g>
  )
}

function Ladder() {
  return (
    <LadderSvg viewBox="210 131 830 565">
      <rect x="210" y="131" width="830" height="565" fill="#d7d7d7" />
      <rect x="210" y="131" width="53" height="565" fill="#f0f0f0" />
      <rect x="1037" y="131" width="3" height="565" fill="#727272" />
      {gridRows.map(y => (
        <g key={y}>
          <path d={`M210 ${y}.5H263`} stroke="#a2a2a2" strokeWidth="1.200" />
          <path d={`M264 ${y + 1}.5H912`} stroke="#ececec" strokeDasharray="3 3" />
        </g>
      ))}
      {[0, 1, 2, 3, 4, 5, 6, 7, 8].map(n => (
        <path key={n} d={`M${329.5 + n * 64.7} 131V696`} stroke="#ececec" strokeDasharray="3 3" />
      ))}
      <LadderText x={260} y={175} $c="#3f3fb4" $end textLength={6} lengthAdjust="spacingAndGlyphs">0</LadderText>
      <LadderText x={260} y={447} $c="#3f3fb4" $end textLength={11} lengthAdjust="spacingAndGlyphs">15</LadderText>
      <LadderText x={260} y={517} $c="#3f3fb4" $end textLength={11} lengthAdjust="spacingAndGlyphs">22</LadderText>

      <g stroke="#333" fill="none">
        <path d="M264 164.500H853" />
        <path d="M329.500 164V401.500" />
        {branchRows.map(y => <path key={y} d={`M329.500 ${y}.5H853`} />)}
        <path d="M264 436.500H912M329.500 436V471.500H912M264 506.500H853" />
        {outputs.map(o => <path key={o.top} d={`M906 ${o.wire}.5H912`} />)}
        <path d="M906 506.500H912" />
      </g>
      <Contact x={297} y={164} label="_ON" w={15} />
      <Contact x={297} y={436} label="_T1S" w={21} />
      <Contact x={362} y={436} label="M0123" w={27} />
      <Contact x={362} y={471} label="M0123" w={27} />
      <Coil y={436} label="M0000" />
      <Coil y={472} label="M0001" />

      {outputs.map(o => (
        <g key={o.label}>
          <rect x="834" y={o.top} width="72" height="20" fill="#dadada" stroke="#333" />
          <path d={`M908 ${o.top + 2}v20h-70`} fill="none" stroke="#c0c0c0" />
          <LadderText x={879} y={o.top + 15} $c={o.warm ? '#c88a52' : '#2e2e2e'} textLength={27} lengthAdjust="spacingAndGlyphs">{o.label}</LadderText>
          <LadderText x={879} y={o.valueY} $c="#cc2440" textLength={o.value.length > 1 ? 16 : 6} lengthAdjust="spacingAndGlyphs">{o.value}</LadderText>
        </g>
      ))}
      <path d="M843 373.500H846.500V413.500H843" fill="none" stroke="#6a7ab0" />
      <rect x="853.500" y="490.500" width="53" height="20" fill="#dadada" stroke="#333" />
      <LadderText x={879} y={505} $c="#2e2e2e" textLength={16} lengthAdjust="spacingAndGlyphs">END</LadderText>
      <rect x="263" y="131" width="2" height="565" fill="#3f3fd0" />
      <rect x="911" y="131" width="2" height="565" fill="#4a4ad6" />
    </LadderSvg>
  )
}

function ComboArrow({ light }: { light?: boolean }) {
  return (
    <svg width="10" height="10" viewBox="0 0 10 10">
      <path d="M1 3l4 4 4-4" fill="none" stroke={light ? '#a6a6a6' : '#444'} strokeWidth="1.100" />
    </svg>
  )
}

function Select({ value, disabled, focus, width }: { value: string; disabled?: boolean; focus?: boolean; width?: number }) {
  return (
    <Combo $disabled={disabled} $focus={focus} $w={width}>
      {value}
      <ComboArrow light={disabled} />
    </Combo>
  )
}

function TreeSlot({ arrow, elbow }: { arrow?: string; elbow?: string }) {
  return (
    <ArrowSlot>
      <svg width="17" height="16" viewBox="0 0 17 16">
        {arrow && <path d={arrow === 'down' ? 'M2.500 6l4 4 4-4' : 'M5 4l4 4-4 4'} fill="none" stroke="#555" strokeWidth="1.200" />}
        {arrow && <path d="M13 8.500h4" stroke="#aaa" strokeDasharray="1 1" />}
        {elbow && <path d={`M9.500 0V${elbow === 'mid' ? 16 : 8.500}M9.500 8.500H17`} fill="none" stroke="#aaa" strokeDasharray="1 1" />}
      </svg>
    </ArrowSlot>
  )
}

export default function App() {
  return (
    <>
      <GlobalStyle />
      <Screen>
        <TitleBar>버스통신 - XG5000</TitleBar>
        <MenuBar>
          {menus.map(([name, key]) => (
            <MenuItem key={key}>{name}<small>({key})</small></MenuItem>
          ))}
        </MenuBar>
        <ToolStack>
          <ToolRow>{rowOne.map(renderTool)}</ToolRow>
          <ToolRow>{rowTwo.map(renderTool)}</ToolRow>
          <ToolRow>{rowThree.map(renderTool)}</ToolRow>
        </ToolStack>
        <Workspace>
          <SidePanel>
            <PanelHead>
              <span>▾</span>
              <svg width="9" height="10" viewBox="0 0 9 10"><path d="M2.500 1h4v5h-4zM1 6h7M4.500 6v4" fill="none" stroke="#555" /></svg>
              <span>✕</span>
            </PanelHead>
            <Tree>
              {treeRows.map(r => (
                r.level === 0
                  ? <TreeRow key={r.text} $left={-1}><TreeText>{r.text}</TreeText></TreeRow>
                  : (
                    <TreeRow key={r.text} $left={(r.level - 1) * 16.7 - 24}>
                      <TreeSlot arrow={r.arrow} elbow={r.elbow} />
                      <TreeBody $selected={r.selected}>
                        <Glyph k={r.icon as string} size={14} />
                        <TreeText $bold={r.bold}>{r.text}</TreeText>
                      </TreeBody>
                    </TreeRow>
                  )
              ))}
            </Tree>
            <SideTabs>
              <span>고속링크 보기</span>
              <span>P2P 보기</span>
            </SideTabs>
          </SidePanel>
          <MainArea>
            <DocTabs>
              {docTabs.map(t => (
                <DocTab key={t.text} $w={t.width} $pad={t.pad} $active={t.active} $first={t.first}>
                  <span>{t.text}</span>
                  <TabClose>×</TabClose>
                </DocTab>
              ))}
            </DocTabs>
            <EditorFrame>
              <Canvas><Ladder /></Canvas>
              <HScroll>‹</HScroll>
            </EditorFrame>
          </MainArea>
        </Workspace>
        <BottomEdge />

        <Dialog>
          <DialogTitle>
            <span>기본 설정 - Cnet</span>
            <svg width="11" height="11" viewBox="0 0 11 11"><path d="M1 1l9 9M10 1l-9 9" stroke="#333" /></svg>
          </DialogTitle>
          <DialogTabs>
            <DialogTab $active>기본 설정</DialogTab>
            <DialogTab>고급 설정</DialogTab>
          </DialogTabs>
          <TabPage>
            <GroupBox $w={351} $h={181}>
              <GroupLegend>접속 설정</GroupLegend>
              <LinkGrid>
                <span />
                <ColHead $inset={12}>채널 1</ColHead>
                <ColHead $inset={18}>채널 2</ColHead>
                <FieldLabel>통신 형태:</FieldLabel>
                <Select value="RS232C" disabled />
                <Select value="RS485" disabled />
                <FieldLabel>통신속도:</FieldLabel>
                <Select value="38400" />
                <Select value="9600" />
                <FieldLabel>종단저항:</FieldLabel>
                <Select value="비활성" disabled />
                <Select value="비활성" disabled />
                <FieldLabel>국번:</FieldLabel>
                <TextBox>1</TextBox>
                <TextBox>0</TextBox>
              </LinkGrid>
            </GroupBox>
            <GroupBox $w={352} $h={74}>
              <GroupLegend>동작 모드</GroupLegend>
              <ModeGrid>
                <FieldLabel>채널 1:</FieldLabel>
                <Select value="P2P 사용" width={151} />
                <ModeButton $drop={1}>모드버스 설정</ModeButton>
                <FieldLabel>채널 2:</FieldLabel>
                <Select value="XGT 서버" focus width={153} />
                <ModeButton $drop={-1}>모드버스 설정</ModeButton>
              </ModeGrid>
            </GroupBox>
          </TabPage>
          <DialogFooter>
            <PushButton $primary>확인</PushButton>
            <PushButton>취소</PushButton>
          </DialogFooter>
        </Dialog>

        <ClickMark />
        <PointerSvg width="10" height="15" viewBox="0 0 10 15">
          <path d="M1 1v11l3-2 2 4 2-1-2-4h3.500z" fill="#fff" stroke="#333" />
        </PointerSvg>
      </Screen>
    </>
  )
}
